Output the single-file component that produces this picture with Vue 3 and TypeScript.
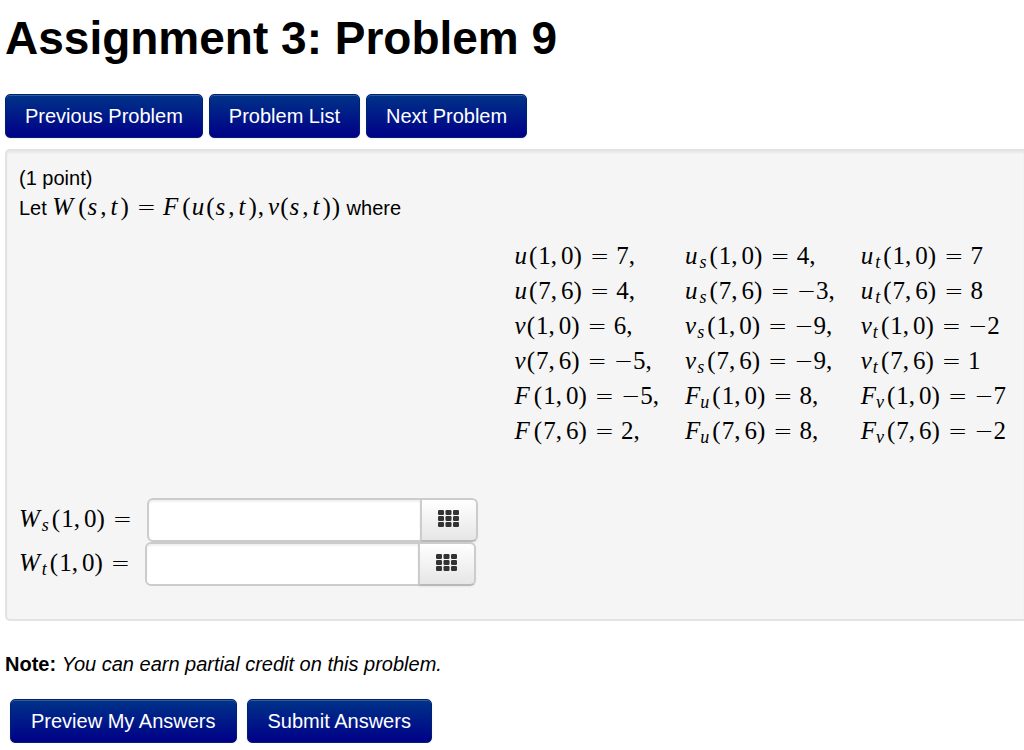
<script setup lang="ts">
import { defineComponent, h, ref } from 'vue'

type Token = { text: string; kind: string }

function tokenize(source: string): Token[] {
  const tokens: Token[] = []
  const chars = Array.from(source)
  for (let i = 0; i < chars.length; i++) {
    const c = chars[i]
    if (c === '_') {
      i++
      tokens.push({ text: chars[i], kind: 'sub' })
    } else if (c === '(' || c === ')') tokens.push({ text: c, kind: 'paren' })
    else if (c === ',') tokens.push({ text: c, kind: 'comma' })
    else if (c === '=') tokens.push({ text: c, kind: 'rel' })
    else if (c === '−') tokens.push({ text: c, kind: 'minus' })
    else if (/\d/.test(c)) tokens.push({ text: c, kind: 'num' })
    else tokens.push({ text: c, kind: `var var-${c}${chars[i + 1] === '_' ? ' indexed' : ''}` })
  }
  return tokens
}

const MathText = defineComponent({
  props: { source: { type: String, required: true } },
  setup(props) {
    return () =>
      h('span', { class: 'math' }, tokenize(props.source).map((t) => h('span', { class: t.kind }, t.text)))
  },
})

const navigation = ['Previous Problem', 'Problem List', 'Next Problem']
const actions = ['Preview My Answers', 'Submit Answers']

const values: string[][] = [
  ['u(1,0)=7,', 'u_s(1,0)=4,', 'u_t(1,0)=7'],
  ['u(7,6)=4,', 'u_s(7,6)=−3,', 'u_t(7,6)=8'],
  ['v(1,0)=6,', 'v_s(1,0)=−9,', 'v_t(1,0)=−2'],
  ['v(7,6)=−5,', 'v_s(7,6)=−9,', 'v_t(7,6)=1'],
  ['F(1,0)=−5,', 'F_u(1,0)=8,', 'F_v(1,0)=−7'],
  ['F(7,6)=2,', 'F_u(7,6)=8,', 'F_v(7,6)=−2'],
]

const answers = ref([
  { id: 'answer-s', label: 'W_s(1,0)=', value: '' },
  { id: 'answer-t', label: 'W_t(1,0)=', value: '' },
])
</script>

<template>
  <main class="page">
    <h1>Assignment 3: Problem 9</h1>
    <nav class="nav">
      <button v-for="item in navigation" :key="item" type="button" class="btn">{{ item }}</button>
    </nav>

    <section class="problem">
      <p class="line">(1 point)</p>
      <p class="line">Let <MathText source="W(s,t)=F(u(s,t),v(s,t))" /> where</p>
      <table class="values">
        <tbody>
          <tr v-for="(row, r) in values" :key="r">
            <td v-for="cell in row" :key="cell"><MathText :source="cell" /></td>
          </tr>
        </tbody>
      </table>
      <div v-for="answer in answers" :key="answer.id" class="answer">
        <label :for="answer.id"><MathText :source="answer.label" /></label>
        <input :id="answer.id" v-model="answer.value" type="text" autocomplete="off" />
        <button type="button" class="keypad" aria-label="Equation editor">
          <svg width="22" height="18" viewBox="0 0 22 18" aria-hidden="true">
            <template v-for="y in 3" :key="y">
              <rect v-for="x in 3" :key="x" :x="(x - 1) * 7.5" :y="(y - 1) * 6" width="6" height="5" rx="1.2" />
            </template>
          </svg>
        </button>
      </div>
    </section>

    <p class="note"><strong>Note:</strong> <em>You can earn partial credit on this problem.</em></p>
    <div class="actions">
      <button v-for="item in actions" :key="item" type="button" class="btn">{{ item }}</button>
    </div>
  </main>
</template>

<style>
body {
  background: #fff;
}
.math {
  font-family: 'Liberation Serif', serif;
  font-size: 25px;
  line-height: 28px;
  white-space: nowrap;
}
.math .var {
  font-style: italic;
  margin-right: 2px;
}
.math .var-s,
.math .var-t {
  margin-right: 3px;
}
.math .var-v {
  margin-right: 1px;
}
.math .var-F {
  margin-right: 4px;
}
.math .var-W {
  margin-right: 5px;
}
.math .var-F.indexed {
  margin-right: 0;
}
.math .var-W.indexed {
  margin-right: 2px;
}
.math .sub {
  font-size: 18px;
  font-style: italic;
  line-height: 0;
  vertical-align: -4px;
  margin-right: 3px;
}
.math .paren {
  margin-right: 1px;
}
.math .comma {
  margin-right: 4px;
}
.math .rel,
.math .minus {
  font-family: 'DejaVu Sans', sans-serif;
  font-size: 23px;
  font-weight: 200;
  line-height: 0;
}
.math .rel {
  margin: 0 7px;
}
</style>

<style scoped>
.page {
  box-sizing: border-box;
  padding: 10px 0 0 5px;
  font-family: 'Liberation Sans', Arial, sans-serif;
  font-size: 20px;
  line-height: 29px;
  color: #000;
}
h1 {
  margin: 0 0 28px;
  font-size: 46px;
  line-height: 56px;
}
.nav {
  display: flex;
  gap: 6px;
}
.btn {
  box-sizing: border-box;
  height: 44px;
  padding: 0 19px;
  border: 1px solid #002070;
  border-radius: 5px;
  background: linear-gradient(#003388, #000088);
  box-shadow: inset 0 1px 0 rgba(255, 255, 255, 0.2), 0 1px 2px rgba(0, 0, 0, 0.08);
  color: #fff;
  font-family: inherit;
  font-size: 20px;
  white-space: nowrap;
}
.actions .btn {
  padding: 0 20px;
}
.problem {
  margin-top: 11px;
  padding: 13px 0 33px 12px;
  border: 2px solid #e3e3e3;
  border-right: 0;
  border-radius: 5px 0 0 5px;
  background: #f5f5f5;
  box-shadow: inset 0 2px 2px rgba(0, 0, 0, 0.05);
}
.line {
  margin: 0;
}
.values {
  margin: 16px 18px 49px auto;
  border-collapse: collapse;
}
.values td {
  height: 35px;
  padding: 0 0 0 22px;
}
.answer {
  display: flex;
  align-items: center;
  height: 44px;
}
.answer label {
  margin-right: 8px;
}
.answer input {
  box-sizing: border-box;
  width: 275px;
  height: 44px;
  padding: 6px 9px;
  border: 2px solid #ccc;
  border-radius: 6px 0 0 6px;
  background: #fff;
  box-shadow: inset 0 2px 2px rgba(0, 0, 0, 0.06);
  font-family: inherit;
  font-size: 20px;
}
.keypad {
  display: flex;
  align-items: center;
  justify-content: center;
  box-sizing: border-box;
  width: 58px;
  height: 44px;
  margin-left: -2px;
  padding: 0 0 3px;
  border: 2px solid #ccc;
  border-bottom-color: #b8b8b8;
  border-radius: 0 6px 6px 0;
  background: linear-gradient(#fff, #e6e6e6);
  box-shadow: 0 1px 2px rgba(0, 0, 0, 0.06);
}
.keypad svg {
  display: block;
  fill: #333;
}
.note {
  margin: 29px 0 20px;
}
.actions {
  display: flex;
  gap: 10px;
  padding-left: 5px;
}
</style>
